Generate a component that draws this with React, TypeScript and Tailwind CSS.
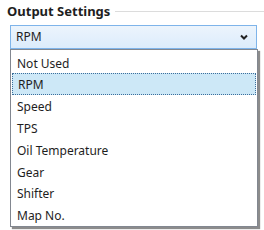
import React from "react";

const items = ["Not Used", "RPM", "Speed", "TPS", "Oil Temperature", "Gear", "Shifter", "Map No."];

export default function App() {
  return (
    <div className="w-[264px] h-[230px] bg-white overflow-hidden text-[#1e1e1e]" style={{ fontFamily: '"Segoe UI", "Noto Sans", sans-serif' }}>
      <div className="flex items-center pl-[7px] pt-[3px] h-[20px]">
        <span className="text-[13px] font-bold leading-none text-[#1e1e1e]">Output Settings</span>
        <div className="flex-1 h-px bg-[#dcdcdc] ml-[5px]" />
      </div>
      <div className="pl-[10px] pr-[7px] pt-[5px]">
        <div className="h-[24px] border border-[#7eb4ea] bg-gradient-to-b from-[#ecf4fc] to-[#dcecfc] flex items-center pl-[5px] pr-[8px] text-[12px]">
          <span className="flex-1">RPM</span>
          <svg width="8" height="6" viewBox="0 0 8 6"><path d="M1 1.5 L4 4.5 L7 1.5" stroke="#222" strokeWidth="2" fill="none" /></svg>
        </div>
        <div className="relative w-[248px]">
          <div className="border border-[#828790] bg-white shadow-[2px_2px_1px_rgba(0,0,0,0.45)] pt-[1px] pb-[1px] px-[1px]">
            {items.map((it, i) => (
              <div
                key={it}
                className={
                  "h-[21.75px] flex items-center pl-[5px] text-[12px] " +
                  (i === 1 ? "bg-[#cde8f7] border border-dotted border-[#3c6f9c] pl-[4px] pt-[2px]" : "pt-[4px]")
                }
              >
                {it}
              </div>
            ))}
          </div>
        </div>
      </div>
    </div>
  );
}
